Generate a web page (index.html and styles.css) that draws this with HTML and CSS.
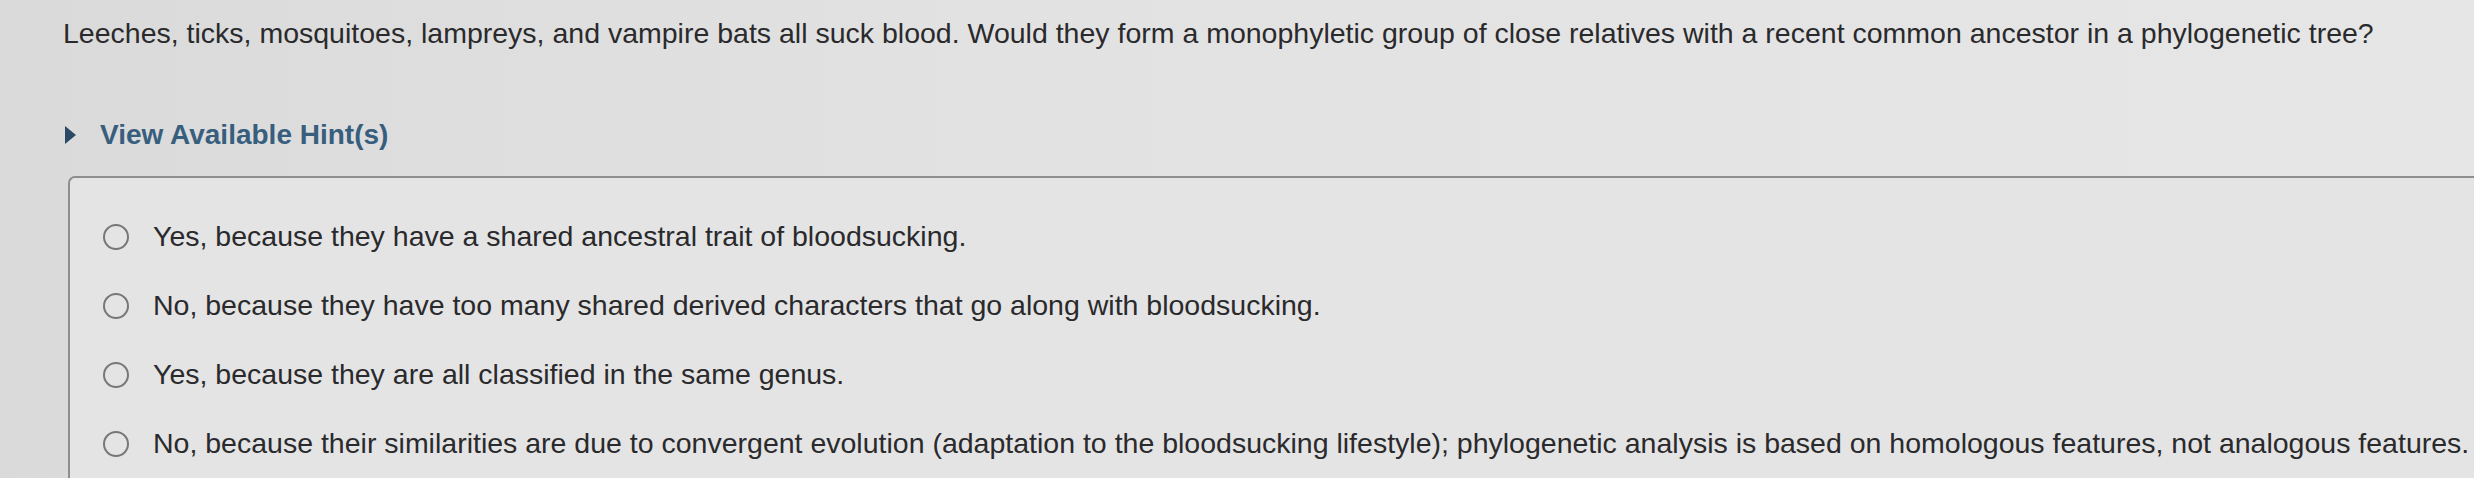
FILE: index.html
```html
<!DOCTYPE html>
<html lang="en">
<head>
<meta charset="utf-8">
<title>Question</title>
<link rel="stylesheet" href="styles.css">
</head>
<body>
<div class="page">
  <p class="question">Leeches, ticks, mosquitoes, lampreys, and vampire bats all suck blood. Would they form a monophyletic group of close relatives with a recent common ancestor in a phylogenetic tree?</p>
  <div class="hint"><span class="caret"></span><span class="hint-text">View Available Hint(s)</span></div>
  <div class="answers">
    <label class="option"><span class="radio"></span><span class="label">Yes, because they have a shared ancestral trait of bloodsucking.</span></label>
    <label class="option"><span class="radio"></span><span class="label">No, because they have too many shared derived characters that go along with bloodsucking.</span></label>
    <label class="option"><span class="radio"></span><span class="label">Yes, because they are all classified in the same genus.</span></label>
    <label class="option"><span class="radio"></span><span class="label">No, because their similarities are due to convergent evolution (adaptation to the bloodsucking lifestyle); phylogenetic analysis is based on homologous features, not analogous features.</span></label>
  </div>
</div>
</body>
</html>
```

FILE: styles.css
```css
html, body {
  margin: 0;
  padding: 0;
  height: 100%;
}
body {
  background: linear-gradient(90deg, #dadada 0%, #e2e2e3 40%, #e6e6e7 100%);
  font-family: "Liberation Sans", Arial, sans-serif;
  color: #2a2a2c;
  overflow: hidden;
}
.page {
  display: flex;
  flex-direction: column;
  height: 100%;
  box-sizing: border-box;
  padding-top: 16px;
}
.question {
  margin: 0;
  padding-left: 63px;
  font-size: 28.5px;
  line-height: 34px;
  white-space: nowrap;
}
.hint {
  display: flex;
  align-items: center;
  margin-top: 68px;
  padding-left: 65px;
  height: 34px;
}
.caret {
  width: 0;
  height: 0;
  border-left: 11px solid #2a4965;
  border-top: 9px solid transparent;
  border-bottom: 9px solid transparent;
  margin-right: 24px;
}
.hint-text {
  font-size: 28px;
  font-weight: bold;
  color: #385e7e;
}
.answers {
  flex: 1;
  margin-top: 24px;
  margin-left: 68px;
  border-top: 2px solid #8e8e90;
  border-left: 2px solid #8e8e90;
  border-top-left-radius: 7px;
  padding: 24px 0 0 33px;
  background: #e4e4e5;
}
.option {
  display: flex;
  align-items: center;
  height: 69px;
  font-size: 28.5px;
  white-space: nowrap;
}
.radio {
  box-sizing: border-box;
  width: 26px;
  height: 26px;
  border: 2px solid #77777a;
  border-radius: 50%;
  margin-right: 24px;
  flex: none;
}
```
